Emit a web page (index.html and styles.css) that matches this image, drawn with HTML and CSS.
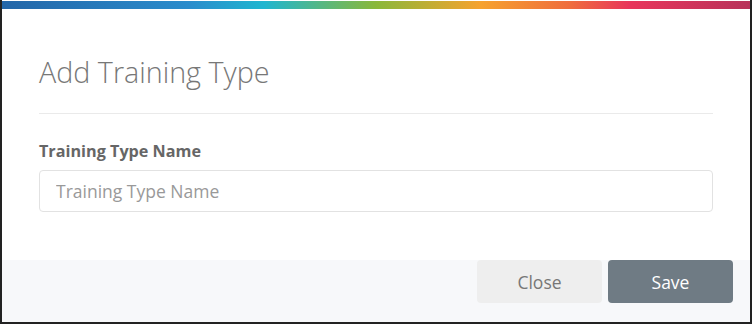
FILE: index.html
```html
<!DOCTYPE html>
<html>
<head>
<meta charset="utf-8">
<link rel="stylesheet" href="styles.css">
</head>
<body>
<div class="frame">
  <div class="bar"></div>
  <div class="body">
    <h1 class="title">Add Training Type</h1>
    <div class="sep"></div>
    <label class="label">Training Type Name</label>
    <input class="input" type="text" placeholder="Training Type Name">
  </div>
  <div class="footer">
    <button class="btn btn-close">Close</button>
    <button class="btn btn-save">Save</button>
  </div>
</div>
</body>
</html>
```
FILE: styles.css
```css
html, body {
  margin: 0;
  padding: 0;
  background: #fff;
}
.frame {
  box-sizing: border-box;
  width: 752px;
  height: 324px;
  border-left: 2px solid #222;
  border-right: 2px solid #222;
  border-bottom: 2px solid #222;
  padding-top: 1px;
  display: flex;
  flex-direction: column;
  font-family: "Open Sans", "Liberation Sans", sans-serif;
  background: #fff;
}
.bar {
  height: 8px;
  background: linear-gradient(to right, #2366a8 0%, #2a8ccc 25%, #1fb6d0 35%, #8ab83a 50%, #f6a22e 64%, #ef6d3e 76%, #e8355b 84%, #b8325a 100%);
}
.body {
  padding: 0 37px;
  flex: 1;
  display: flex;
  flex-direction: column;
}
.title {
  margin: 43px 0 0;
  font-weight: 300;
  font-size: 28.7px;
  line-height: 40px;
  color: #777;
}
.sep {
  margin-top: 21px;
  height: 1px;
  background: #eaeaea;
}
.label {
  margin-top: 26px;
  font-weight: 700;
  font-size: 16.2px;
  line-height: 22px;
  color: #666;
}
.input {
  box-sizing: border-box;
  margin-top: 8px;
  height: 42px;
  width: 100%;
  border: 1px solid #e2e2e2;
  border-radius: 4px;
  padding: 0 16px;
  font-family: "Open Sans", "Liberation Sans", sans-serif;
  font-size: 17.5px;
  color: #555;
  outline: none;
}
.input::placeholder {
  color: #999;
}
.footer {
  height: 62px;
  background: #f7f8fa;
  display: flex;
  justify-content: flex-end;
  align-items: flex-start;
  gap: 6px;
  padding-right: 17px;
}
.btn {
  width: 125px;
  height: 43px;
  border: none;
  border-radius: 4px;
  font-family: "Open Sans", "Liberation Sans", sans-serif;
  font-size: 17.5px;
  cursor: pointer;
}
.btn-close {
  background: #eeeeee;
  color: #777;
}
.btn-save {
  background: #6f7b84;
  color: #fff;
}
```
